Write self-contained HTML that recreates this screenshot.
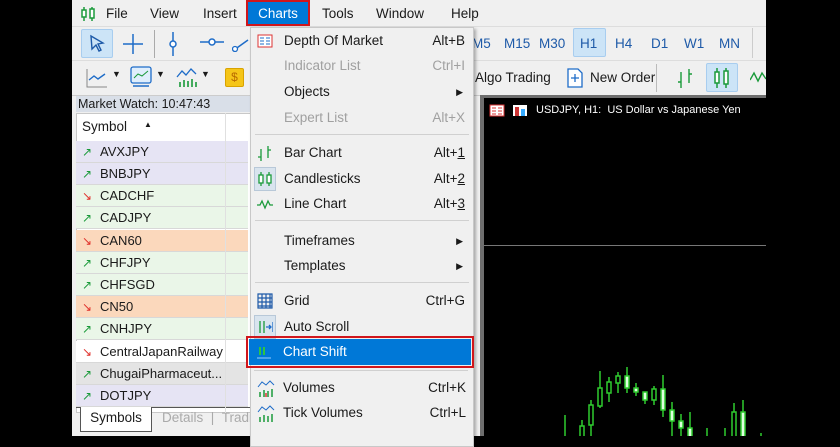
<!DOCTYPE html>
<html><head><style>
*{margin:0;padding:0;box-sizing:border-box}
body{width:840px;height:436px;background:#000;position:relative;overflow:hidden;font-family:"Liberation Sans",sans-serif;font-size:13px;color:#1a1a1a}
.abs{position:absolute}
#app{left:72px;top:0;width:694px;height:436px;background:#f0f0f0;overflow:hidden}
.mb{top:0;height:27px;line-height:27px;font-size:13.5px}
.tb{color:#1e5aa8;font-size:13.5px}
.row{position:absolute;left:4px;width:172px;height:22px;line-height:22px;border-bottom:1px solid #d8d8d8;padding-left:24px;font-size:13px;white-space:nowrap;overflow:hidden}
.row i{position:absolute;left:6px;top:0;font-style:normal;font-size:12px}
.up{color:#1a9a3a}.dn{color:#e0302a}
#menu{left:250px;top:27px;width:224px;height:420px;background:#f0f0f0;border:1px solid #c8c8c8;box-shadow:2px 2px 3px rgba(0,0,0,.3)}
.mi{position:absolute;left:0;width:222px;height:24px;line-height:24px;font-size:13.5px}
.mi .t{position:absolute;left:33px}
.mi .k{position:absolute;right:8px}
.mi .ar{position:absolute;right:10px;font-size:9px}
.dis{color:#a0a0a0}
.sep{position:absolute;left:4px;width:214px;height:1px;background:#d0d0d0}
.ic{position:absolute;left:6px;top:4px;width:16px;height:16px}
</style></head><body>
<div id="app" class="abs">
 <div class="abs" style="left:0;top:0;width:694px;height:27px;background:#f0f0f0;border-bottom:1px solid #ddd"></div>
 <svg class="abs" style="left:8px;top:6px" width="16" height="16"><g stroke="#1a9a3a" stroke-width="1.5" fill="none"><path d="M4 1v14M12 1v14"/><rect x="2" y="4" width="4" height="7" fill="#fff"/><rect x="10" y="3" width="4" height="9" fill="#fff"/></g></svg>
 <div class="abs mb" style="left:34px">File</div>
 <div class="abs mb" style="left:78px">View</div>
 <div class="abs mb" style="left:131px">Insert</div>
 <div class="abs" style="left:174px;top:0;width:64px;height:26px;background:#0078d7;border:2px solid #d0161c;color:#fff;line-height:23px;text-align:center;font-size:13.5px">Charts</div>
 <div class="abs mb" style="left:250px">Tools</div>
 <div class="abs mb" style="left:304px">Window</div>
 <div class="abs mb" style="left:379px">Help</div>
 <div class="abs" style="left:9px;top:29px;width:32px;height:29px;background:#cce4f7;border:1px solid #a8cdef;border-radius:2px"></div>
 <svg class="abs" style="left:16px;top:34px" width="20" height="20"><path d="M3 2l12 7-5 1 3 6-2 1-3-6-4 4z" fill="none" stroke="#1e5aa8" stroke-width="1.4"/></svg>
 <svg class="abs" style="left:50px;top:33px" width="22" height="22"><path d="M11 1v20M1 11h20" stroke="#1e6cc8" stroke-width="1.5"/></svg>
 <div class="abs" style="left:82px;top:30px;width:1px;height:28px;background:#aaa"></div>
 <svg class="abs" style="left:96px;top:32px" width="10" height="24"><path d="M5 0v24" stroke="#1e6cc8" stroke-width="1.5"/><circle cx="5" cy="12" r="3" fill="#fff" stroke="#1e6cc8" stroke-width="1.5"/></svg>
 <svg class="abs" style="left:128px;top:37px" width="24" height="10"><path d="M0 5h24" stroke="#1e6cc8" stroke-width="1.5"/><circle cx="12" cy="5" r="3" fill="#fff" stroke="#1e6cc8" stroke-width="1.5"/></svg>
 <svg class="abs" style="left:160px;top:38px" width="18" height="14"><path d="M2 12l14-10" stroke="#1e6cc8" stroke-width="1.5"/><circle cx="3" cy="11" r="2.5" fill="#fff" stroke="#1e6cc8" stroke-width="1.3"/></svg>
 <div class="abs tb" style="left:400px;top:36px">M5</div>
 <div class="abs tb" style="left:432px;top:36px">M15</div>
 <div class="abs tb" style="left:467px;top:36px">M30</div>
 <div class="abs" style="left:501px;top:28px;width:33px;height:29px;background:#cce4f7;border:1px solid #a8cdef;border-radius:2px"></div>
 <div class="abs tb" style="left:508px;top:36px">H1</div>
 <div class="abs tb" style="left:543px;top:36px">H4</div>
 <div class="abs tb" style="left:579px;top:36px">D1</div>
 <div class="abs tb" style="left:612px;top:36px">W1</div>
 <div class="abs tb" style="left:647px;top:36px">MN</div>
 <div class="abs" style="left:680px;top:28px;width:1px;height:30px;background:#ccc"></div>
 <div class="abs" style="left:0;top:60px;width:694px;height:1px;background:#ddd"></div>
 <svg class="abs" style="left:14px;top:68px" width="22" height="20"><path d="M1 1v18h20" stroke="#888" fill="none"/><path d="M3 12l5-4 4 3 7-5" stroke="#1e6cc8" stroke-width="1.4" fill="none"/></svg>
 <div class="abs" style="left:40px;top:69px;font-size:9px">▼</div>
 <svg class="abs" style="left:58px;top:66px" width="22" height="22"><rect x="1" y="1" width="20" height="16" rx="2" fill="#dfeefc" stroke="#1e6cc8" stroke-width="1.3"/><path d="M4 12l4-4 4 2 6-5" stroke="#1a9a3a" fill="none"/><path d="M3 20h16" stroke="#1e6cc8" stroke-width="1.5"/></svg>
 <div class="abs" style="left:84px;top:69px;font-size:9px">▼</div>
 <svg class="abs" style="left:104px;top:66px" width="22" height="22"><path d="M1 11l5-6 4 4 5-6 5 5" stroke="#1e6cc8" fill="none" stroke-width="1.3"/><path d="M4 21v-5M8 21v-7M12 21v-6M16 21v-8M20 21v-5" stroke="#1a9a3a" stroke-width="1.6"/></svg>
 <div class="abs" style="left:129px;top:69px;font-size:9px">▼</div>
 <div class="abs" style="left:153px;top:68px;width:19px;height:19px;background:#f5c518;border:1px solid #d9a300;border-radius:2px;color:#b86a00;font-size:12px;text-align:center;line-height:17px">$</div>
 <div class="abs" style="left:403px;top:70px;font-size:13.5px">Algo Trading</div>
 <svg class="abs" style="left:495px;top:68px" width="16" height="20"><path d="M1 1h10l4 4v14H1z" fill="#fff" stroke="#1e6cc8" stroke-width="1.3"/><path d="M8 6v8M4 10h8" stroke="#1e6cc8" stroke-width="1.3"/></svg>
 <div class="abs" style="left:518px;top:70px;font-size:13.5px">New Order</div>
 <div class="abs" style="left:584px;top:64px;width:1px;height:28px;background:#bbb"></div>
 <svg class="abs" style="left:604px;top:68px" width="18" height="20"><path d="M5 4v16M2 14h3M13 1v14M13 6h3" stroke="#1a9a3a" stroke-width="1.4" fill="none"/></svg>
 <div class="abs" style="left:634px;top:63px;width:32px;height:29px;background:#cce4f7;border:1px solid #a8cdef;border-radius:2px"></div>
 <svg class="abs" style="left:641px;top:67px" width="18" height="22"><g stroke="#1a9a3a" stroke-width="1.5" fill="none"><path d="M4 1v20M13 1v20"/><rect x="2" y="5" width="4" height="11" fill="#fff"/><rect x="11" y="4" width="4" height="13" fill="#fff"/></g></svg>
 <svg class="abs" style="left:678px;top:70px" width="16" height="14"><path d="M0 10l4-7 4 8 4-8 4 6" stroke="#1a9a3a" stroke-width="1.4" fill="none"/></svg>
 <div class="abs" style="left:0;top:95px;width:694px;height:1px;background:#ccc"></div>
 <div class="abs" style="left:4px;top:96px;width:176px;height:16px;background:#d9dfe8;font-size:12.5px;line-height:16px;padding-left:2px">Market Watch: 10:47:43</div>
 <div class="abs" style="left:4px;top:113px;width:176px;height:300px;background:#fff;border:1px solid #c8c8c8"></div>
 <div class="abs" style="left:10px;top:119px;font-size:13.5px">Symbol</div>
 <div class="abs" style="left:72px;top:120px;font-size:8px">▲</div>
 <div class="abs" style="left:153px;top:113px;width:1px;height:300px;background:#e0e0e0;z-index:2"></div>
 <div class="row" style="top:141px;background:#e6e4f4"><i class="up">↗</i>AVXJPY</div>
 <div class="row" style="top:163px;background:#e6e4f4"><i class="up">↗</i>BNBJPY</div>
 <div class="row" style="top:185px;background:#eaf6e8"><i class="dn">↘</i>CADCHF</div>
 <div class="row" style="top:207px;background:#eaf6e8"><i class="up">↗</i>CADJPY</div>
 <div class="row" style="top:230px;background:#fbd8bc"><i class="dn">↘</i>CAN60</div>
 <div class="row" style="top:252px;background:#eaf6e8"><i class="up">↗</i>CHFJPY</div>
 <div class="row" style="top:274px;background:#eaf6e8"><i class="up">↗</i>CHFSGD</div>
 <div class="row" style="top:296px;background:#fbd8bc"><i class="dn">↘</i>CN50</div>
 <div class="row" style="top:318px;background:#eaf6e8"><i class="up">↗</i>CNHJPY</div>
 <div class="row" style="top:341px;background:#fff"><i class="dn">↘</i>CentralJapanRailway</div>
 <div class="row" style="top:363px;background:#e4e4e4"><i class="up">↗</i>ChugaiPharmaceut...</div>
 <div class="row" style="top:385px;background:#e6e4f4"><i class="up">↗</i>DOTJPY</div>
 <div class="abs" style="left:4px;top:407px;width:176px;height:1px;background:#555"></div>
 <div class="abs" style="left:8px;top:407px;width:72px;height:25px;background:#fff;border:1px solid #555;border-top:none;text-align:center;line-height:22px;font-size:13.5px">Symbols</div>
 <div class="abs" style="left:90px;top:410px;color:#aaa;font-size:13.5px">Details&nbsp;&nbsp;|&nbsp;&nbsp;Tradi</div>
 <div class="abs" style="left:408px;top:95px;width:290px;height:345px;background:#6e6e6e"></div>
 <div class="abs" style="left:412px;top:98px;width:290px;height:345px;background:#000"></div>
 <div class="abs" style="left:412px;top:245px;width:290px;height:1px;background:#777"></div>
 <svg class="abs" style="left:417px;top:104px" width="40" height="14"><rect x="1" y="1" width="14" height="11" fill="#fff" stroke="#d33"/><path d="M3 4h4M3 7h4M3 10h4M9 4h4M9 7h4M9 10h4" stroke="#d33"/><rect x="24" y="1" width="14" height="11" fill="#fff"/><rect x="26" y="3" width="4" height="9" fill="#c33"/><rect x="32" y="5" width="4" height="7" fill="#3af"/></svg>
 <div class="abs" style="left:464px;top:104px;color:#fff;font-size:11px">USDJPY, H1:&nbsp; US Dollar vs Japanese Yen</div>
</div>
<svg class="abs" style="left:0;top:0" width="840" height="436"><g stroke="#2fcc2f" stroke-width="1.5" fill="none">
<path d="M565 415v21M582 420v16M591 400v36M600 371v37M609 377v25M618 372v21M627 367v26M636 383v13M645 392v12M654 386v19M663 375v42M672 402v34M681 414v22M690 412v24M707 428v8M725 428v8M734 403v33M743 400v36M761 433v3"/>
<rect x="580" y="426" width="4" height="12" fill="#000"/><rect x="589" y="405" width="4" height="20" fill="#000"/><rect x="598" y="388" width="4" height="18" fill="#000"/><rect x="607" y="382" width="4" height="11" fill="#000"/><rect x="616" y="376" width="4" height="7" fill="#000"/>
<rect x="625" y="376" width="4" height="12" fill="#dfffdf"/><rect x="634" y="388" width="4" height="4" fill="#dfffdf"/><rect x="643" y="392" width="4" height="8" fill="#dfffdf"/><rect x="652" y="389" width="4" height="11" fill="#000"/><rect x="661" y="389" width="4" height="21" fill="#dfffdf"/><rect x="670" y="410" width="4" height="11" fill="#dfffdf"/><rect x="679" y="421" width="4" height="7" fill="#dfffdf"/><rect x="688" y="428" width="4" height="10" fill="#dfffdf"/><rect x="732" y="412" width="4" height="26" fill="#000"/><rect x="741" y="412" width="4" height="26" fill="#dfffdf"/>
</g></svg>
<div id="menu" class="abs">
 <div class="mi" style="top:1px"><svg class="ic" width="16" height="16"><rect x="1" y="2" width="14" height="12" fill="#fff" stroke="#d33"/><path d="M3 5h4M3 8h4M3 11h4M9 5h4M9 8h4M9 11h4" stroke="#1e6cc8"/></svg><span class="t">Depth Of Market</span><span class="k">Alt+B</span></div>
 <div class="mi dis" style="top:26px"><span class="t">Indicator List</span><span class="k">Ctrl+I</span></div>
 <div class="mi" style="top:52px"><span class="t">Objects</span><span class="ar">▶</span></div>
 <div class="mi dis" style="top:78px"><span class="t">Expert List</span><span class="k">Alt+X</span></div>
 <div class="sep" style="top:106px"></div>
 <div class="mi" style="top:113px"><svg class="ic" width="16" height="16"><path d="M4 4v12M1 12h3M11 1v12M11 5h3" stroke="#1a9a3a" stroke-width="1.3"/></svg><span class="t">Bar Chart</span><span class="k">Alt+<u>1</u></span></div>
 <div class="mi" style="top:139px"><div class="abs" style="left:3px;top:0;width:22px;height:24px;background:#d9e4ee;border:1px solid #b8c8d8"></div><svg class="ic" width="16" height="16"><g stroke="#1a9a3a" stroke-width="1.3" fill="#fff"><path d="M4 1v14M12 1v14"/><rect x="2" y="4" width="4" height="8"/><rect x="10" y="4" width="4" height="8"/></g></svg><span class="t">Candlesticks</span><span class="k">Alt+<u>2</u></span></div>
 <div class="mi" style="top:164px"><svg class="ic" width="16" height="16"><path d="M0 9h3l2-4 3 7 3-7 2 4h3" stroke="#1a9a3a" stroke-width="1.3" fill="none"/></svg><span class="t">Line Chart</span><span class="k">Alt+<u>3</u></span></div>
 <div class="sep" style="top:192px"></div>
 <div class="mi" style="top:201px"><span class="t">Timeframes</span><span class="ar">▶</span></div>
 <div class="mi" style="top:226px"><span class="t">Templates</span><span class="ar">▶</span></div>
 <div class="sep" style="top:254px"></div>
 <div class="mi" style="top:261px"><svg class="ic" width="16" height="16"><path d="M1 1h14v14H1zM1 5h14M1 9h14M1 13h14M5 1v14M9 1v14M13 1v14" stroke="#1e5aa8" stroke-width="1.2" fill="none"/></svg><span class="t">Grid</span><span class="k">Ctrl+G</span></div>
 <div class="mi" style="top:287px"><div class="abs" style="left:3px;top:0;width:22px;height:24px;background:#d9e4ee;border:1px solid #b8c8d8"></div><svg class="ic" width="18" height="16"><path d="M3 2v12M7 2v12" stroke="#1a9a3a" stroke-width="1.3"/><path d="M9 8h5M12 6l2 2-2 2M16 3v10" stroke="#1e6cc8" stroke-width="1.3" fill="none"/></svg><span class="t">Auto Scroll</span></div>
</div>
<div class="abs" style="left:246px;top:336px;width:228px;height:32px;border:2px solid #d0161c"></div>
<div class="abs" style="left:249px;top:339px;width:222px;height:26px;background:#0078d7;color:#fff;font-size:13.5px;line-height:26px"><svg class="abs" style="left:7px;top:6px" width="16" height="14"><path d="M4 2v8M8 2v8" stroke="#3c3" stroke-width="1.8"/><path d="M1 13h14" stroke="#9cf"/></svg><span class="abs" style="left:34px">Chart Shift</span></div>
<div class="abs" style="left:254px;top:370px;width:214px;height:1px;background:#d0d0d0"></div>
<div class="abs" style="left:250px;top:376px;width:222px;height:24px;line-height:24px;font-size:13.5px"><svg class="abs" style="left:7px;top:4px" width="18" height="18"><path d="M1 7l4-5 4 3 4-4 4 4" stroke="#1e6cc8" fill="none"/><path d="M3 17v-5M7 17v-7M11 17v-6M15 17v-8" stroke="#1a9a3a" stroke-width="1.5"/><path d="M9 17v-4" stroke="#d33" stroke-width="1.5"/></svg><span class="abs" style="left:33px">Volumes</span><span class="abs" style="right:6px">Ctrl+K</span></div>
<div class="abs" style="left:250px;top:401px;width:222px;height:24px;line-height:24px;font-size:13.5px"><svg class="abs" style="left:7px;top:4px" width="18" height="18"><path d="M1 7l4-5 4 3 4-4 4 4" stroke="#1e6cc8" fill="none"/><path d="M3 17v-5M7 17v-7M11 17v-6M15 17v-8" stroke="#1a9a3a" stroke-width="1.5"/></svg><span class="abs" style="left:33px">Tick Volumes</span><span class="abs" style="right:6px">Ctrl+L</span></div>
</body></html>
